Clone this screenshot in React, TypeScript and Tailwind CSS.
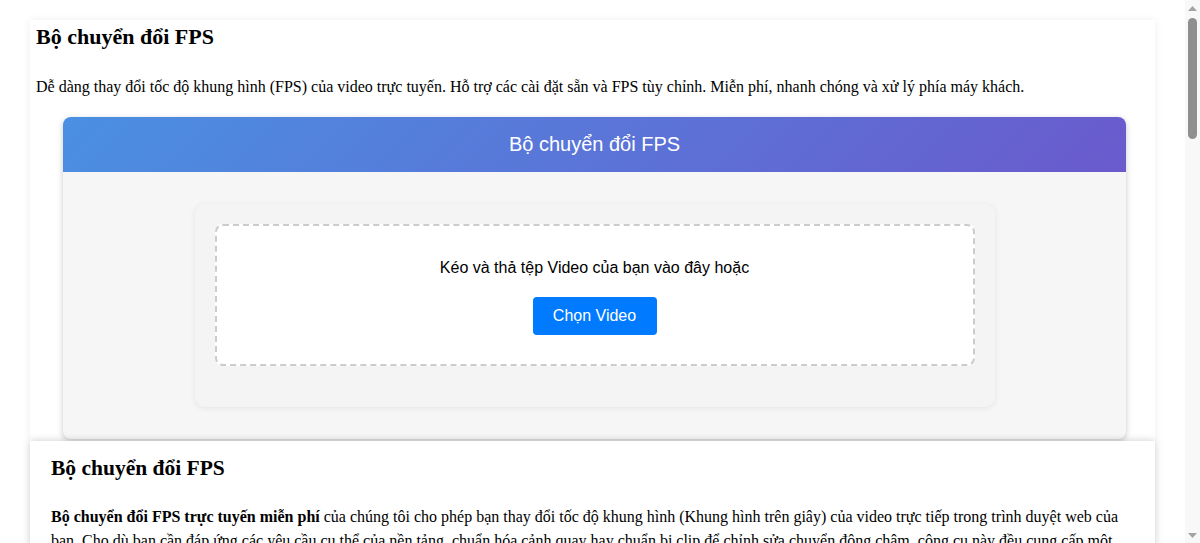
import React from "react";

const extraSections: { title: string; paras: string[] }[] = [
  {
    title: "FPS là gì và tại sao nó quan trọng?",
    paras: [
      "FPS (khung hình trên giây) là số lượng hình ảnh tĩnh được hiển thị liên tiếp trong một giây để tạo ra chuyển động. Tốc độ khung hình ảnh hưởng trực tiếp đến độ mượt mà, dung lượng tệp và khả năng tương thích của video với các nền tảng khác nhau.",
      "Các tốc độ khung hình phổ biến bao gồm 24 FPS cho phim điện ảnh, 25 FPS cho tiêu chuẩn PAL, 30 FPS cho video trực tuyến và truyền hình NTSC, cùng với 60 FPS cho trò chơi và nội dung thể thao có chuyển động nhanh.",
    ],
  },
  {
    title: "Cách sử dụng Bộ chuyển đổi FPS",
    paras: [
      "Bước 1: Nhấp vào nút \"Chọn Video\" hoặc kéo và thả tệp video của bạn vào khu vực tải lên.",
      "Bước 2: Chọn một tốc độ khung hình được cài đặt sẵn hoặc nhập giá trị FPS tùy chỉnh theo nhu cầu của bạn.",
      "Bước 3: Nhấp vào nút chuyển đổi và chờ quá trình xử lý hoàn tất ngay trong trình duyệt.",
    ],
  },
];

function ScrollBar() {
  return (
    <div className="flex h-full w-[15px] shrink-0 flex-col bg-[#f8f8f8]">
      <div className="flex h-[15px] items-start justify-center pt-[6px]">
        <svg width="9" height="5" viewBox="0 0 9 5">
          <polygon points="4.5,0 9,5 0,5" fill="#a3a3a3" />
        </svg>
      </div>
      <div className="flex flex-1 justify-center pt-[3px]">
        <div className="h-[121px] w-[9px] rounded-full bg-[#8f8f8f]" />
      </div>
      <div className="flex h-[15px] items-end justify-center pb-[5px]">
        <svg width="9" height="5" viewBox="0 0 9 5">
          <polygon points="0,0 9,0 4.5,5" fill="#a3a3a3" />
        </svg>
      </div>
    </div>
  );
}

export default function App() {
  return (
    <div className="flex h-[543px] w-[1200px] overflow-hidden bg-white">
      <div className="h-full flex-1 overflow-hidden">
        <div className="pt-[20px] pb-[20px] font-['Liberation_Serif','Times_New_Roman',serif] text-black">
          {/* Top card */}
          <div className="mx-auto w-[1125px] bg-white pl-[6px] pr-[6px] pt-[3px] pb-[2px] shadow-[0_0_8px_rgba(0,0,0,0.07)]">
            <h1 className="text-[22px] font-bold leading-[28px]">Bộ chuyển đổi FPS</h1>
            <p className="mt-[27px] text-[16px] leading-[18px]">
              Dễ dàng thay đổi tốc độ khung hình (FPS) của video trực tuyến. Hỗ trợ các cài đặt sẵn và FPS tùy chỉnh. Miễn phí, nhanh chóng và xử lý phía máy khách.
            </p>

            {/* Tool card */}
            <div className="ml-[27px] mt-[21px] w-[1063px] overflow-hidden rounded-lg bg-[#f6f6f6] font-['Liberation_Sans',Arial,sans-serif] shadow-[0_2px_6px_rgba(0,0,0,0.22)]">
              <div className="bg-[linear-gradient(135deg,#4a90e2,#6a5acd)] py-[16px] text-center text-[20px] leading-[23px] text-white">
                Bộ chuyển đổi FPS
              </div>
              <div className="py-[32px]">
                <div className="mx-auto w-[800px] rounded-[10px] bg-[#f4f4f4] px-5 pt-5 pb-[41px] shadow-[0_1px_6px_rgba(0,0,0,0.08)]">
                  <div className="flex flex-col items-center rounded-lg border-2 border-dashed border-[#cccccc] bg-white pt-[33px] pb-[29px]">
                    <p className="text-[16px] leading-[18px] text-black">Kéo và thả tệp Video của bạn vào đây hoặc</p>
                    <button className="mt-[20px] h-[38px] w-[124px] rounded-[4px] bg-[#007bff] text-[16px] text-white">
                      Chọn Video
                    </button>
                  </div>
                </div>
              </div>
            </div>
          </div>

          {/* Article card */}
          <div className="mx-auto w-[1125px] bg-white px-[21px] pt-[14px] pb-[30px] shadow-[0_0_8px_rgba(0,0,0,0.2)]">
            <h2 className="text-[21.5px] font-bold leading-[26px]">Bộ chuyển đổi FPS</h2>
            <p className="mt-[24px] text-[16px] leading-[24px]">
              <strong>Bộ chuyển đổi FPS trực tuyến miễn phí</strong> của chúng tôi cho phép bạn thay đổi tốc độ khung hình (Khung hình trên giây) của video trực tiếp trong trình duyệt web của bạn. Cho dù bạn cần đáp ứng các yêu cầu cụ thể của nền tảng, chuẩn hóa cảnh quay hay chuẩn bị clip để chỉnh sửa chuyển động chậm, công cụ này đều cung cấp một giải pháp nhanh chóng và đơn giản mà không cần cài đặt bất kỳ phần mềm nào.
            </p>
            {extraSections.map((s) => (
              <div key={s.title} className="mt-[28px]">
                <h3 className="text-[19px] font-bold leading-[24px]">{s.title}</h3>
                {s.paras.map((p, i) => (
                  <p key={i} className="mt-[16px] text-[16px] leading-[24px]">
                    {p}
                  </p>
                ))}
              </div>
            ))}
          </div>
        </div>
      </div>
      <ScrollBar />
    </div>
  );
}
